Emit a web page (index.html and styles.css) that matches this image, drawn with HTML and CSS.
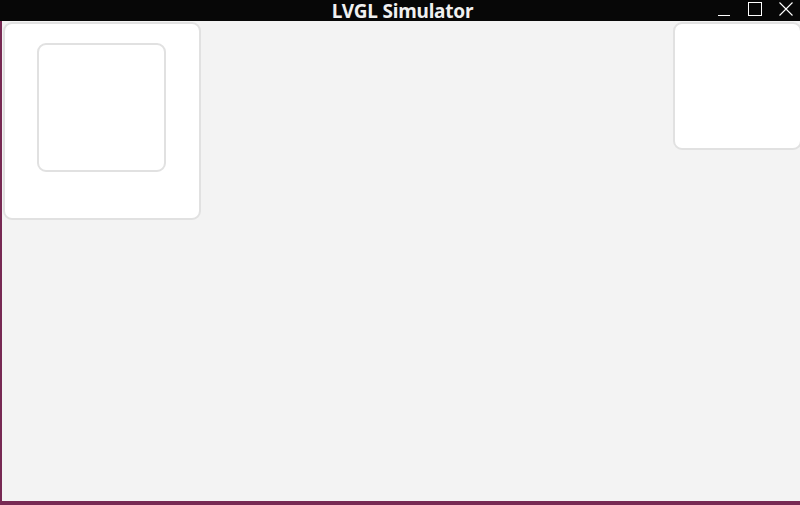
FILE: index.html
```html
<!DOCTYPE html>
<html>
<head>
<meta charset="utf-8">
<link rel="stylesheet" href="styles.css">
</head>
<body>
<div class="window">
  <div class="titlebar">
    <span class="title">LVGL Simulator</span>
    <div class="controls">
      <svg class="ctl" width="14" height="14" viewBox="0 0 14 14"><line x1="1" y1="13.5" x2="13" y2="13.5" stroke="#fff" stroke-width="1"/></svg>
      <svg class="ctl" width="14" height="14" viewBox="0 0 14 14"><rect x="0.5" y="0.5" width="13" height="13" fill="none" stroke="#fff" stroke-width="1"/></svg>
      <svg class="ctl" width="14" height="14" viewBox="0 0 14 14"><path d="M0.5 0.5 L13.5 13.5 M13.5 0.5 L0.5 13.5" stroke="#fff" stroke-width="1.1"/></svg>
    </div>
  </div>
  <div class="body">
    <div class="edge"></div>
    <div class="screen">
      <div class="card big">
        <div class="inner"></div>
      </div>
      <div class="card small"></div>
    </div>
  </div>
  <div class="bottom"></div>
</div>
</body>
</html>
```
FILE: styles.css
```css
html, body {
  margin: 0;
  padding: 0;
  background: #772953;
}
.window {
  width: 800px;
  height: 505px;
  display: flex;
  flex-direction: column;
  overflow: hidden;
}
.titlebar {
  height: 21px;
  background: #070707;
  position: relative;
  display: flex;
  justify-content: center;
  align-items: center;
  flex-shrink: 0;
}
.title {
  color: #f0f0f0;
  font-family: "Noto Sans", "Open Sans", sans-serif;
  font-weight: bold;
  font-size: 19px;
  line-height: 1;
  margin-left: 5px;
  margin-top: 1px;
  letter-spacing: -0.2px;
}
.controls {
  position: absolute;
  right: 7px;
  top: 2px;
  display: flex;
  gap: 17px;
}
.ctl {
  display: block;
}
.body {
  display: flex;
  height: 480px;
  flex-shrink: 0;
}
.edge {
  width: 2px;
  background: #772953;
  flex-shrink: 0;
}
.screen {
  flex: 1;
  background: #f3f3f3;
  display: flex;
  justify-content: space-between;
  align-items: flex-start;
  padding: 1px 0 0 1px;
  overflow: hidden;
}
.card {
  background: #ffffff;
  border: 2px solid #e1e1e1;
  border-radius: 9px;
  box-sizing: border-box;
}
.big {
  width: 198px;
  height: 198px;
  padding: 19px 0 0 32px;
}
.inner {
  width: 129px;
  height: 129px;
  border: 2px solid #e1e1e1;
  border-radius: 9px;
  box-sizing: border-box;
}
.small {
  width: 129px;
  height: 128px;
  margin-right: -2px;
}
.bottom {
  height: 4px;
  background: #772953;
  flex-shrink: 0;
}
```
